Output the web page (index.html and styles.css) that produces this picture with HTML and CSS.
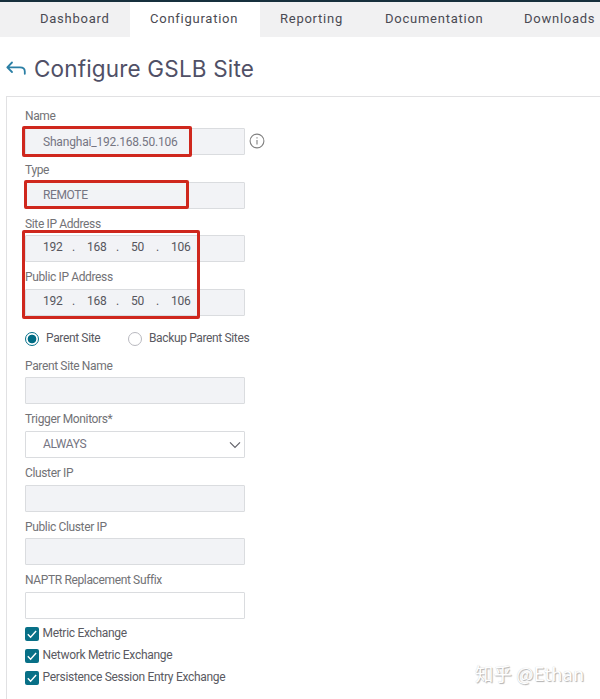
FILE: index.html
```html
<!DOCTYPE html>
<html lang="en">
<head>
<meta charset="utf-8">
<title>Configure GSLB Site</title>
<link rel="stylesheet" href="styles.css">
</head>
<body>
<nav class="tabs">
  <a class="tab dash">Dashboard</a>
  <a class="tab conf active">Configuration</a>
  <a class="tab rep">Reporting</a>
  <a class="tab docs">Documentation</a>
  <a class="tab down">Downloads</a>
</nav>
<header class="heading">
  <svg class="back" width="20" height="16" viewBox="0 0 20 16"><path d="M6 1.500 1.300 6.300 6 11M1.500 6.300H14Q18.800 6.300 18.800 10.500V12.800"/></svg>
  <h1>Configure GSLB Site</h1>
</header>
<main class="panel">
  <div class="field"><label>Name</label><div class="row"><div class="input name">Shanghai_192.168.50.106</div>
    <svg class="info" width="16" height="16" viewBox="0 0 16 16"><circle cx="8" cy="8" r="6.900"/><path d="M8 7v4.500M8 4.200v1.300"/></svg></div></div>
  <div class="field"><label>Type</label><div class="input remote">REMOTE</div></div>
  <div class="field"><label>Site IP Address</label><div class="input ip"><span>192</span><i>.</i><span>168</span><i>.</i><span>50</span><i>.</i><span>106</span></div></div>
  <div class="field"><label>Public IP Address</label><div class="input ip"><span>192</span><i>.</i><span>168</span><i>.</i><span>50</span><i>.</i><span>106</span></div></div>
  <div class="radios">
    <span class="radio on"></span><span class="first">Parent Site</span>
    <span class="radio"></span><span class="second">Backup Parent Sites</span>
  </div>
  <div class="field"><label>Parent Site Name</label><div class="input"></div></div>
  <div class="field"><label>Trigger Monitors*</label><div class="input white select">ALWAYS
    <svg width="12" height="8" viewBox="0 0 12 8"><path d="M1 1.300l5 5 5-5"/></svg></div></div>
  <div class="field"><label>Cluster IP</label><div class="input"></div></div>
  <div class="field"><label>Public Cluster IP</label><div class="input"></div></div>
  <div class="field"><label>NAPTR Replacement Suffix</label><div class="input white"></div></div>
  <div class="checks">
    <div class="check"><svg width="14" height="14" viewBox="0 0 14 14"><path d="M2.800 7.200l2.800 3 5.500-6.200"/></svg><span>Metric Exchange</span></div>
    <div class="check"><svg width="14" height="14" viewBox="0 0 14 14"><path d="M2.800 7.200l2.800 3 5.500-6.200"/></svg><span>Network Metric Exchange</span></div>
    <div class="check"><svg width="14" height="14" viewBox="0 0 14 14"><path d="M2.800 7.200l2.800 3 5.500-6.200"/></svg><span>Persistence Session Entry Exchange</span></div>
  </div>
</main>
<div class="mark mark-name"></div>
<div class="mark mark-type"></div>
<div class="mark mark-ip"></div>
<div class="watermark">知乎 <span>@Ethan</span></div>
</body>
</html>
```
FILE: styles.css
```css
* { box-sizing: border-box; }
body { margin: 0; width: 600px; height: 699px; overflow: hidden; position: relative; background: #fff; font-family: Roboto, "Liberation Sans", sans-serif; font-size: 12px; letter-spacing: -.36px; color: #5a5a62; }
.tabs { display: flex; height: 37px; border-top: 2px solid #17303d; background: #f1f1f2; white-space: nowrap; overflow: hidden; }
.tab { flex: none; padding-top: 8px; line-height: 18px; font-size: 13px; letter-spacing: .75px; color: #4a4a52; }
.dash { width: 130px; padding-left: 40px; }
.conf { width: 130px; padding-left: 20px; }
.rep { width: 105px; padding-left: 20px; }
.docs { width: 139px; padding-left: 20px; }
.down { width: 96px; padding-left: 20px; }
.active { background: #fff; }
.heading { height: 59px; display: flex; align-items: center; padding: 4px 0 0 6px; }
.back { fill: none; stroke: #2b7fa5; stroke-width: 1.8; stroke-linejoin: round; stroke-linecap: round; margin-right: 8px; }
h1 { margin: 0; font-family: Inter, sans-serif; font-weight: 400; font-size: 22.500px; line-height: 30px; color: #505066; letter-spacing: .17px; white-space: nowrap; }
.panel { margin-left: 6px; height: 620px; border: 1px solid #e1e1e3; border-right: 0; border-bottom: 0; padding: 4.300px 0 0 18px; }
.field { height: 53.700px; }
.field label { display: block; height: 26.700px; padding-top: 7px; line-height: 16px; color: #727276; white-space: nowrap; }
.row { display: flex; align-items: center; gap: 4px; }
.input { position: relative; width: 220px; height: 27px; border: 1px solid #dadcdf; background: #f2f3f6; border-radius: 1px; padding-left: 17px; line-height: 24px; color: #757582; white-space: nowrap; }
.name { letter-spacing: -.18px; line-height: 26px; }
.white { background: #fff; }
.info { fill: none; stroke: #818181; stroke-width: 1.1; }
.ip { display: flex; color: #56565d; letter-spacing: -.3px; line-height: 23px; }
.ip i { font-style: normal; width: 15px; }
.ip span:nth-child(1) { width: 29px; }
.ip span:nth-child(3) { width: 29px; }
.ip span:nth-child(5) { width: 25px; }
.radios { height: 34.500px; display: flex; align-items: center; padding-top: 12px; white-space: nowrap; }
.radio { flex: none; width: 14px; height: 14px; border: 1px solid #b9b9bf; border-radius: 50%; background: #fff; }
.on { border-color: #04708a; background: radial-gradient(circle, #006c84 0 4px, #fff 4.700px); }
.first { width: 82px; margin: 0 0 0 7px; }
.second { margin-left: 7px; }
.radios .first, .radios .second { position: relative; top: -1px; }
.select svg { position: absolute; right: 3px; top: 9px; fill: none; stroke: #62626a; stroke-width: 1.2; }
.checks { padding-top: 4.500px; }
.check { height: 22px; display: flex; align-items: center; gap: 4px; white-space: nowrap; letter-spacing: -.3px; }
.check svg { background: #087087; border-radius: 2px; fill: none; stroke: #fff; stroke-width: 1.4; }
.check span { position: relative; top: -1px; left: -.5px; }
.mark { position: absolute; border: 3px solid #cf271d; border-radius: 2px; }
.mark-name { left: 22px; top: 126px; width: 170px; height: 31px; }
.mark-type { left: 24px; top: 180px; width: 165px; height: 29px; }
.mark-ip { left: 22px; top: 230px; width: 178px; height: 89px; }
.watermark { position: absolute; left: 475px; top: 660px; font: 18.300px/26px "Noto Sans CJK SC", sans-serif; letter-spacing: .2px; color: #fff; text-shadow: 1px 1px 1px #b0b0b0, 0 0 1px #ccc; white-space: nowrap; }
```
